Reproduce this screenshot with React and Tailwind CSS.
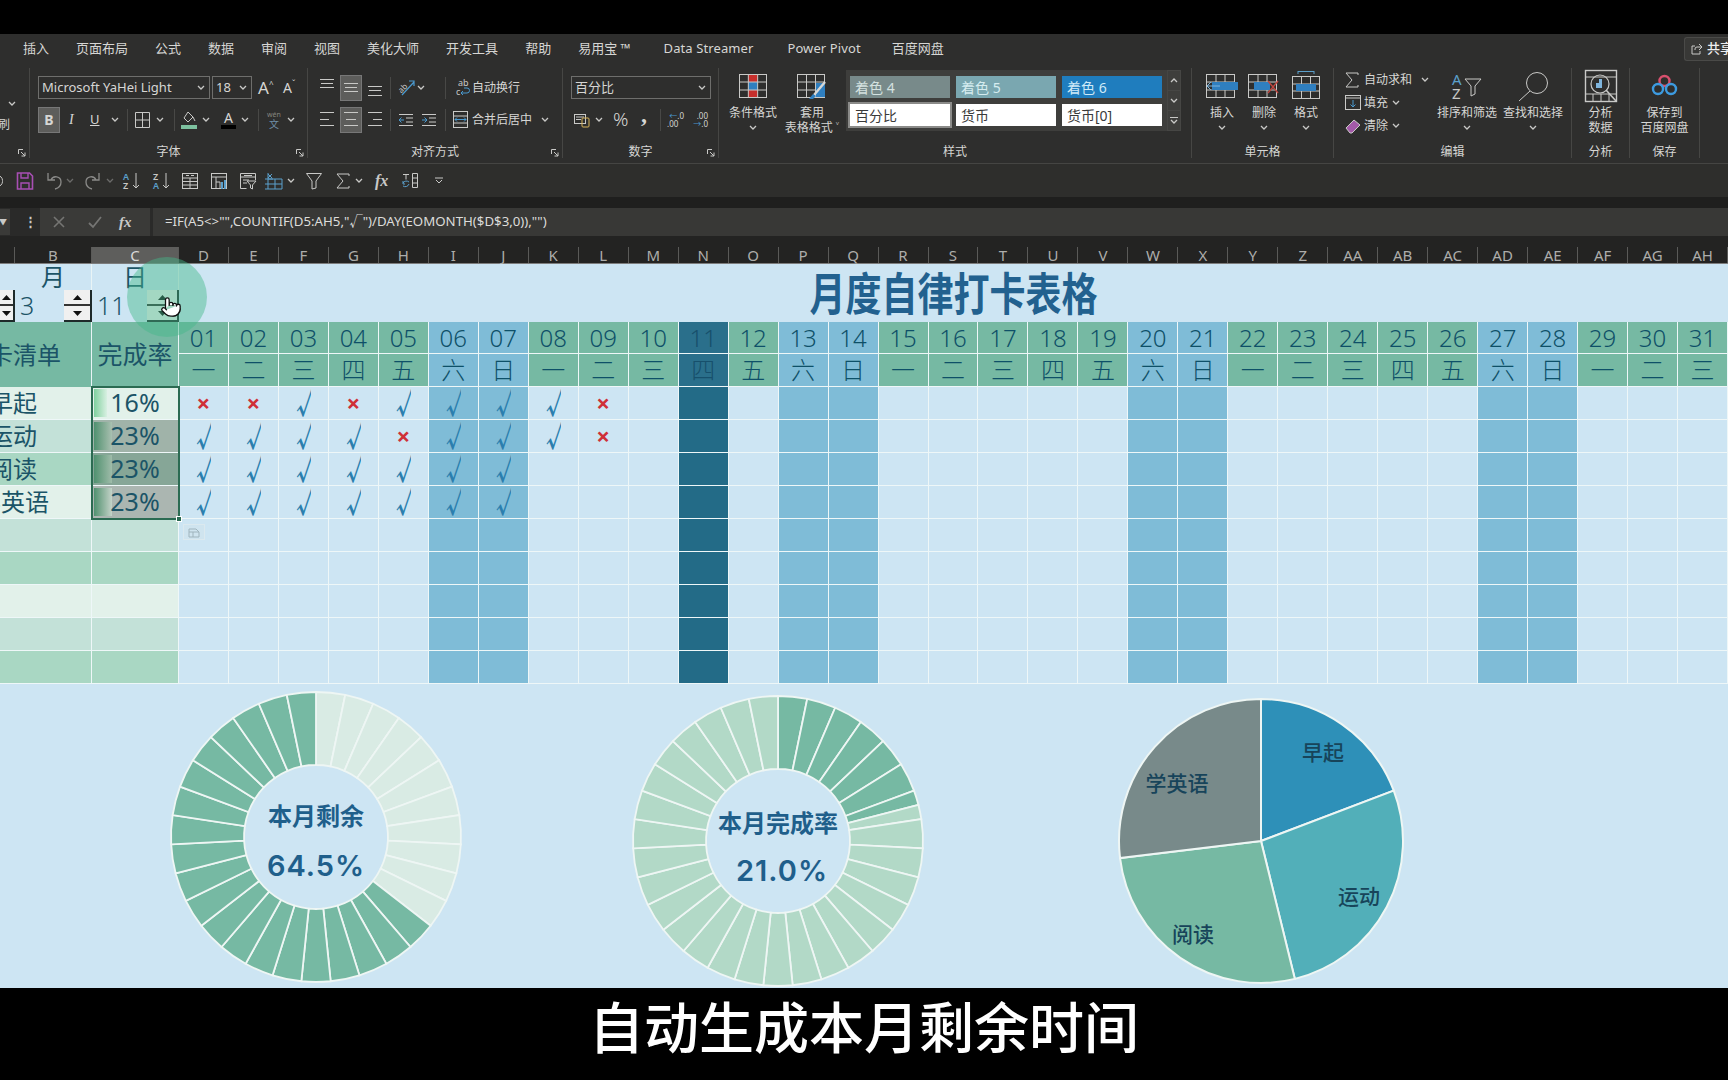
import React from "react";
import { Pointer } from "lucide-react";

const COLS = "D E F G H I J K L M N O P Q R S T U V W X Y Z AA AB AC AD AE AF AG AH".split(" ");
const WEEK = ["一", "二", "三", "四", "五", "六", "日"];
const days = Array.from({ length: 31 }, (_, i) => i);
const isWeekend = (i) => i % 7 === 5 || i % 7 === 6;

const rows = [
  { name: "早起", pct: "16%", bg: "bg-[#e2f1ea]", pctBg: "bg-[#e2f1ea]", bar: "w-[13px] from-[#7ed09f] to-[#d8f0e2]", marks: "xx√x√√√√x" },
  { name: "运动", pct: "23%", bg: "bg-[#c3e1d8]", pctBg: "bg-[#a0b3a9]", bar: "w-[18px] from-[#4f9170] to-[#a9c0b1]", marks: "√√√√x√√√x" },
  { name: "阅读", pct: "23%", bg: "bg-[#a9d7c3]", pctBg: "bg-[#86a697]", bar: "w-[18px] from-[#4f9170] to-[#9fbcaa]", marks: "√√√√√√√" },
  { name: "学英语", pct: "23%", bg: "bg-[#e2f1ea]", pctBg: "bg-[#abb6b1]", bar: "w-[18px] from-[#4f9170] to-[#c4d3c9]", marks: "√√√√√√√" },
  { name: "", pct: "", bg: "bg-[#c3e1d8]", pctBg: "bg-[#c3e1d8]", marks: "" },
  { name: "", pct: "", bg: "bg-[#a9d7c3]", pctBg: "bg-[#a9d7c3]", marks: "" },
  { name: "", pct: "", bg: "bg-[#e2f1ea]", pctBg: "bg-[#e2f1ea]", marks: "" },
  { name: "", pct: "", bg: "bg-[#c3e1d8]", pctBg: "bg-[#c3e1d8]", marks: "" },
  { name: "", pct: "", bg: "bg-[#a9d7c3]", pctBg: "bg-[#a9d7c3]", marks: "" },
];

const GREY = "#c9c9c7";
const BLUE = "#2f7fc0";
const SKY = "#5ba0cc";

const Ico = ({ w, h, className = "", children }) => (
  <svg width={w} height={h} viewBox={`0 0 ${w} ${h}`} fill="none" stroke={GREY} strokeWidth="1" className={`shrink-0 overflow-visible ${className}`}>
    {children}
  </svg>
);

const Chev = ({ className = "" }) => (
  <Ico w={8} h={5} className={className}>
    <path d="M1 1l3 3 3-3" strokeWidth="1.3" />
  </Ico>
);

const Sep = ({ className = "" }) => <div className={`h-[22px] w-px shrink-0 bg-[#484846] ${className}`} />;

// three text lines used by the alignment buttons
const Lines = ({ ys, spans, className = "" }) => (
  <Ico w={14} h={23} className={className}>
    {ys.map((y, i) => (
      <path key={i} d={`M${spans[i][0]} ${y + 0.5}H${spans[i][1]}`} />
    ))}
  </Ico>
);

const Grid3 = ({ children, w = 30, h = 22 }) => (
  <Ico w={w} h={h}>
    {children}
    <rect x=".5" y=".5" width={w - 1} height={h - 1} />
    <path d={`M.5 ${h / 3}H${w}M.5 ${(2 * h) / 3}H${w}M${w / 3} 0V${h}M${(2 * w) / 3} 0V${h}`} />
  </Ico>
);

const Launcher = () => (
  <Ico w={8} h={8} className="absolute bottom-[1px] right-[3px]">
    <path d="M.5 5V.5H5M3 3l4 4M7 3.5V7H3.5" />
  </Ico>
);

const Group = ({ className, label, launcher, children }) => (
  <div className={`relative flex h-[90px] shrink-0 flex-col border-r border-[#464644] ${className}`}>
    <div className="h-[77px]">{children}</div>
    <div className="h-[13px] text-center text-[12px] leading-[13px]">{label}</div>
    {launcher && <Launcher />}
  </div>
);

const BigBtn = ({ className, icon, lines, chev = true }) => (
  <div className={`flex shrink-0 flex-col items-center ${className}`}>
    <div className="flex h-[37px] items-start pt-[6px]">{icon}</div>
    {lines.map((t) => (
      <div key={t} className="h-[15px] whitespace-nowrap text-[12px] leading-[15px]">{t}</div>
    ))}
    {chev && <div className="flex h-[15px] items-center"><Chev /></div>}
  </div>
);

const StyleCell = ({ className, children }) => (
  <div className={`flex h-[22px] w-[100px] items-center pl-[5px] text-[14px] ${className}`}>{children}</div>
);

const Ribbon = () => (
  <div className="h-[130px] shrink-0 border-b border-[#454543] bg-[#2e2e2d] text-[#d6d6d4]">
    <div className="flex h-[30px] items-center gap-[27px] pl-[23px] text-[13px]">
      <span>插入</span>
      <span>页面布局</span>
      <span>公式</span>
      <span>数据</span>
      <span>审阅</span>
      <span>视图</span>
      <span>美化大师</span>
      <span>开发工具</span>
      <span>帮助</span>
      <span>易用宝 ™</span>
      <span className="ml-[6px] tracking-[0.1px]">Data Streamer</span>
      <span className="ml-[7px] tracking-[0.1px]">Power Pivot</span>
      <span className="ml-[4px]">百度网盘</span>
      <div className="ml-auto flex h-[24px] w-[44px] items-center gap-[4px] overflow-hidden rounded-l-[3px] border border-r-0 border-[#4a4a48] bg-[#383836] pl-[6px] text-[#eee]">
        <Ico w={12} h={12}><path d="M8 1l3 3-3 3M11 4H6a2 2 0 00-2 2v1M9 8v3H1V3h3" /></Ico>
        <span className="whitespace-nowrap font-medium">共享</span>
      </div>
    </div>

    <div className="mt-[4px] flex">
      {/* clipboard stub */}
      <Group className="w-[30px]" launcher>
        <div className="flex h-full flex-col items-start pt-[33px]">
          <Chev className="ml-[8px]" />
          <span className="ml-[-2px] mt-[12px] text-[12px] leading-[14px]">刷</span>
        </div>
      </Group>

      {/* font */}
      <Group className="w-[278px]" label="字体" launcher>
        <div className="mt-[8px] flex h-[23px] items-center">
          <div className="ml-[8px] flex h-[23px] w-[172px] items-center justify-between border border-[#6e6e6c] pl-[3px] pr-[4px] text-[13px]">
            Microsoft YaHei Light <Chev />
          </div>
          <div className="ml-[2px] flex h-[23px] w-[40px] items-center justify-between border border-[#6e6e6c] pl-[3px] pr-[4px] text-[13px]">
            18 <Chev />
          </div>
          <span className="ml-[6px] w-[18px] text-[17px] leading-none">A<span className="align-super text-[8px]">^</span></span>
          <span className="ml-[7px] w-[15px] text-[14px] leading-none">A<span className="align-super text-[8px]">ˇ</span></span>
        </div>
        <div className="mt-[9px] flex h-[23px] items-center">
          <div className="ml-[8px] flex h-[26px] w-[22px] items-center justify-center border border-[#777] bg-[#5d5d5b] text-[14px] font-bold">B</div>
          <span className="ml-[9px] w-[6px] font-['Liberation_Serif',serif] text-[14px] italic">I</span>
          <span className="ml-[15px] w-[12px] text-[13px] underline">U</span>
          <Chev className="ml-[9px]" />
          <Sep className="ml-[8px]" />
          <Ico w={15} h={16} className="ml-[7px]"><path d="M.5.5h14v15H.5zM7.5 0v16M0 8h15" /></Ico>
          <Chev className="ml-[6px]" />
          <Sep className="ml-[10px]" />
          <Ico w={16} h={18} className="ml-[6px]">
            <path d="M7 1l5 5-5 5-4-4zM12 6l2 4" />
            <rect x="0" y="14" width="16" height="4" fill="#7dc19f" stroke="none" />
          </Ico>
          <Chev className="ml-[5px]" />
          <div className="ml-[11px] flex w-[15px] flex-col items-center">
            <span className="text-[14px] leading-[14px]">A</span>
            <div className="h-[4px] w-[15px] bg-black" />
          </div>
          <Chev className="ml-[5px]" />
          <Sep className="ml-[9px]" />
          <div className="ml-[8px] flex w-[14px] flex-col items-center text-[#85857f]">
            <span className="text-[7px] leading-[8px]">wén</span>
            <span className="text-[10px] leading-[10px] text-[#6f8fa8]">文</span>
          </div>
          <Chev className="ml-[6px]" />
        </div>
      </Group>

      {/* alignment */}
      <Group className="w-[255px]" label="对齐方式" launcher>
        <div className="mt-[8px] flex h-[23px] items-center">
          <Lines className="ml-[12px]" ys={[3, 7, 11]} spans={[[0, 14], [1, 13], [0, 14]]} />
          <div className="ml-[6px] flex h-[26px] w-[22px] items-center justify-center border border-[#777] bg-[#5d5d5b]">
            <Lines ys={[7, 11, 15]} spans={[[0, 14], [1, 13], [0, 14]]} />
          </div>
          <Lines className="ml-[6px]" ys={[10, 14, 19]} spans={[[0, 14], [1, 13], [0, 14]]} />
          <Sep className="ml-[8px]" />
          <Ico w={17} h={18} className="ml-[7px]">
            <text x="1" y="13" fontSize="8" fill={GREY} stroke="none" transform="rotate(-45 4 11)">ab</text>
            <path d="M4 16L16 3M11 2h5v5" stroke="#4a9ad0" strokeWidth="1.2" />
          </Ico>
          <Chev className="ml-[2px]" />
          <Sep className="ml-[20px]" />
          <Ico w={15} h={19} className="ml-[9px]">
            <text x="3" y="8" fontSize="9" fill={GREY} stroke="none">ab</text>
            <text x="1" y="17" fontSize="9" fill={GREY} stroke="none">c</text>
            <path d="M7 15h5a2 2 0 000-5H9M8 13l-2 2 2 2" stroke="#4a9ad0" />
          </Ico>
          <span className="ml-[2px] text-[12px]">自动换行</span>
        </div>
        <div className="mt-[9px] flex h-[23px] items-center">
          <Lines className="ml-[12px]" ys={[4, 11, 17]} spans={[[0, 14], [0, 9], [0, 14]]} />
          <div className="ml-[6px] flex h-[26px] w-[22px] items-center justify-center border border-[#777] bg-[#5d5d5b]">
            <Lines ys={[4, 11, 17]} spans={[[0, 14], [2, 12], [0, 14]]} />
          </div>
          <Lines className="ml-[6px]" ys={[4, 11, 17]} spans={[[0, 14], [5, 14], [0, 14]]} />
          <Sep className="ml-[8px]" />
          <Ico w={14} h={14} className="ml-[8px]">
            <path d="M0 1.5h14M7 5h7M7 9h7M0 12.5h14" />
            <path d="M5 7H0M2.5 4.5L0 7l2.5 2.5" stroke="#4a9ad0" />
          </Ico>
          <Ico w={14} h={14} className="ml-[9px]">
            <path d="M0 1.5h14M7 5h7M7 9h7M0 12.5h14" />
            <path d="M0 7h5M2.5 4.5L5 7 2.5 9.5" stroke="#4a9ad0" />
          </Ico>
          <Sep className="ml-[9px]" />
          <Ico w={15} h={17} className="ml-[7px]">
            <rect x=".5" y=".5" width="14" height="16" />
            <path d="M0 5h15M0 12h15" />
            <path d="M2 8.5h11M4 6.5l-2 2 2 2M11 6.5l2 2-2 2" stroke="#4a9ad0" />
          </Ico>
          <span className="ml-[4px] text-[12px]">合并后居中</span>
          <Chev className="ml-[9px]" />
        </div>
      </Group>

      {/* number */}
      <Group className="w-[156px]" label="数字" launcher>
        <div className="mt-[8px] flex h-[23px] items-center">
          <div className="ml-[8px] flex h-[23px] w-[140px] items-center justify-between border border-[#6e6e6c] pl-[3px] pr-[4px] text-[13px]">
            百分比 <Chev />
          </div>
        </div>
        <div className="mt-[9px] flex h-[23px] items-center">
          <Ico w={16} h={16} className="ml-[11px]">
            <rect x=".5" y="2.5" width="11" height="9" />
            <path d="M2 5h8M2 7.5h5" />
            <rect x="8" y="6" width="7" height="9" rx="1" stroke="#d8b45a" />
          </Ico>
          <Chev className="ml-[5px]" />
          <span className="ml-[10px] w-[16px] text-[19px] font-light leading-none">%</span>
          <span className="ml-[12px] w-[9px] -translate-y-[6px] font-['Liberation_Serif',serif] text-[24px] font-bold leading-none">,</span>
          <Sep className="ml-[10px]" />
          <div className="ml-[6px] flex w-[17px] flex-col text-[8px] leading-[8px]">
            <span className="text-right"><span className="text-[#4a9ad0]">←</span>.0</span>
            <span>.00</span>
          </div>
          <div className="ml-[7px] flex w-[17px] flex-col text-[8px] leading-[8px]">
            <span className="text-right">.00</span>
            <span className="text-right"><span className="text-[#4a9ad0]">→</span>.0</span>
          </div>
        </div>
      </Group>

      {/* styles */}
      <Group className="w-[473px]" label="样式">
        <div className="flex">
          <BigBtn
            className="ml-[4px] w-[60px]"
            lines={["条件格式"]}
            icon={
              <Grid3 w={28} h={24}>
                <rect x="9" y="0" width="10" height="8" fill="#c62f2c" stroke="none" />
                <rect x="9" y="8" width="10" height="8" fill="#2f7fc0" stroke="none" />
                <rect x="9" y="16" width="10" height="8" fill="#c62f2c" stroke="none" />
              </Grid3>
            }
          />
          <BigBtn
            className="ml-[-1px] w-[60px]"
            lines={["套用", "表格格式 ˅"]}
            chev={false}
            icon={
              <Ico w={30} h={26}>
                <rect x=".5" y=".5" width="27" height="23" />
                <path d="M.5 8H28M.5 16H28M9.5 0v24M18.5 0v24" />
                <rect x="19" y="9" width="9" height="14" fill={BLUE} stroke="none" />
                <path d="M28 8L17 21" stroke="#d8d8d6" strokeWidth="2.4" />
                <path d="M16 20l3 2-3 3-4 0z" fill={BLUE} stroke="none" />
              </Ico>
            }
          />
          <div className="ml-[4px] mt-[2px] flex h-[61px] w-[335px] bg-[#3e3e3c] pl-[4px]">
            <div className="grid grid-cols-[100px_100px_100px] grid-rows-[22px_22px] gap-[6px] pt-[6px]">
              <StyleCell className="bg-[#788a8a] text-[#d5e2e0]">着色 4</StyleCell>
              <StyleCell className="bg-[#7aa7b0] text-[#d5ecef]">着色 5</StyleCell>
              <StyleCell className="bg-[#1f7dbe] text-[#cfeaf8]">着色 6</StyleCell>
              <StyleCell className="bg-white text-[#3a3a3a] outline-2 outline-[#8b8b89]">百分比</StyleCell>
              <StyleCell className="bg-white text-[#3a3a3a]">货币</StyleCell>
              <StyleCell className="bg-white text-[#3a3a3a]">货币[0]</StyleCell>
            </div>
            <div className="ml-[5px] flex w-[14px] flex-col border border-[#464644]">
              <div className="flex h-[20px] items-center justify-center border-b border-[#464644]"><Chev className="rotate-180" /></div>
              <div className="flex h-[20px] items-center justify-center border-b border-[#464644]"><Chev /></div>
              <div className="flex flex-1 flex-col items-center justify-center">
                <div className="mb-[1px] h-px w-[8px] bg-[#c9c9c7]" />
                <Chev />
              </div>
            </div>
          </div>
        </div>
      </Group>

      {/* cells */}
      <Group className="w-[142px]" label="单元格">
        <div className="flex pl-[9px]">
          <BigBtn
            className="w-[42px]"
            lines={["插入"]}
            icon={
              <Ico w={32} h={24}>
                <rect x=".5" y=".5" width="28" height="23" />
                <path d="M0 8h29M0 16h29M10 0v24M19 0v24" />
                <rect x="6" y="8" width="26" height="8" fill={BLUE} stroke="none" />
                <path d="M14 12H1M5 8l-4 4 4 4" stroke="#7fb5dd" />
              </Ico>
            }
          />
          <BigBtn
            className="w-[42px]"
            lines={["删除"]}
            icon={
              <Ico w={32} h={24}>
                <rect x=".5" y=".5" width="28" height="23" />
                <path d="M0 8h29M0 16h29M10 0v24M19 0v24" />
                <rect x="6" y="8" width="16" height="8" fill={BLUE} stroke="none" />
                <path d="M20 7l10 12M30 7L20 19" stroke="#c0473f" strokeWidth="1.4" />
              </Ico>
            }
          />
          <BigBtn
            className="w-[42px]"
            lines={["格式"]}
            icon={
              <Ico w={28} h={28} className="-mt-[3px]">
                <path d="M6 .5h16M6 0v3M22 0v3" stroke="#5ba0cc" />
                <rect x=".5" y="5.5" width="27" height="22" />
                <path d="M0 13h28M0 20h28M9.5 5v23M18.5 5v23" />
                <rect x="4" y="13" width="20" height="7" fill={BLUE} stroke="none" />
              </Ico>
            }
          />
        </div>
      </Group>

      {/* editing */}
      <Group className="w-[238px]" label="编辑">
        <div className="flex pl-[11px]">
          <div className="w-[89px] shrink-0 text-[12px]">
            <div className="flex h-[23px] items-center">
              <Ico w={14} h={16}><path d="M13 3V1H1l6 7-6 7h12v-2" /></Ico>
              <span className="ml-[5px]">自动求和</span>
              <Chev className="ml-[9px]" />
            </div>
            <div className="flex h-[23px] items-center">
              <Ico w={16} h={15}>
                <rect x=".5" y=".5" width="15" height="14" />
                <path d="M0 3h16" />
                <path d="M8 5v7M5.5 9.5L8 12l2.5-2.5" stroke="#4a9ad0" />
              </Ico>
              <span className="ml-[3px]">填充</span>
              <Chev className="ml-[4px]" />
            </div>
            <div className="flex h-[23px] items-center">
              <Ico w={16} h={16}>
                <path d="M1 10l8-8 6 5-8 8H5z" fill="#a35aa8" stroke="#c9c9c7" />
              </Ico>
              <span className="ml-[3px]">清除</span>
              <Chev className="ml-[4px]" />
            </div>
          </div>
          <BigBtn
            className="w-[66px]"
            lines={["排序和筛选"]}
            icon={
              <Ico w={30} h={26} className="-mt-[1px]">
                <text x="0" y="12" fontSize="15" fill={SKY} stroke="none">A</text>
                <text x="0" y="26" fontSize="15" fill={GREY} stroke="none">Z</text>
                <path d="M13 6h16l-6 7v8l-4 2V13z" />
              </Ico>
            }
          />
          <BigBtn
            className="w-[66px]"
            lines={["查找和选择"]}
            icon={
              <Ico w={30} h={29} className="-mt-[2px]">
                <circle cx="19" cy="11" r="10.5" />
                <path d="M12 19L1 29" />
              </Ico>
            }
          />
        </div>
      </Group>

      {/* analysis */}
      <Group className="w-[58px]" label="分析">
        <BigBtn
          className="w-full"
          lines={["分析", "数据"]}
          chev={false}
          icon={
            <Ico w={32} h={32} className="-mt-[4px]">
              <rect x=".5" y=".5" width="31" height="31" strokeWidth="1.4" />
              <path d="M0 7h32M0 24h32M8 24v8M16 24v8M24 24v8" />
              <circle cx="15" cy="14" r="9" strokeWidth="1.2" />
              <path d="M11 18v-5h3v5zM14 18V9h3v9z" fill="#7fb5dd" stroke="none" />
              <path d="M21 20l10 11" strokeWidth="1.6" />
            </Ico>
          }
        />
      </Group>

      {/* save */}
      <Group className="w-[70px]" label="保存">
        <BigBtn
          className="w-full"
          lines={["保存到", "百度网盘"]}
          chev={false}
          icon={
            <Ico w={27} h={24} className="-mt-[1px]">
              <circle cx="13.5" cy="8" r="5" stroke="#d8506e" strokeWidth="2.4" />
              <circle cx="7" cy="16" r="5" stroke="#3d9be0" strokeWidth="2.4" />
              <circle cx="20" cy="16" r="5" stroke="#3d9be0" strokeWidth="2.4" />
            </Ico>
          }
        />
      </Group>
    </div>
  </div>
);

const SortIco = ({ top, bottom, topColor, bottomColor, className = "" }) => (
  <Ico w={18} h={18} className={className}>
    <text x="0" y="8" fontSize="9" fontWeight="600" fill={topColor} stroke="none">{top}</text>
    <text x="0" y="17" fontSize="9" fontWeight="600" fill={bottomColor} stroke="none">{bottom}</text>
    <path d="M13 1v15M10 13l3 3 3-3" />
  </Ico>
);

const Qat = () => (
  <div className="flex h-[33px] shrink-0 items-center bg-[#2e2e2c]">
    <div className="ml-[-8px] h-[12px] w-[11px] rounded-full border border-[#c9c9c7]" />
    <Ico w={16} h={18} className="ml-[14px]">
      <path d="M.5 1h12l3 3v13H.5z" stroke="#a84fb4" strokeWidth="1.6" />
      <path d="M4 1v5h7V1M4 17v-6h8v6" stroke="#a84fb4" strokeWidth="1.4" />
    </Ico>
    <Ico w={15} h={18} className="ml-[14px]">
      <path d="M4 8C6 3 14 4 14 10c0 3-2 6-6 7M1 1v7h7" stroke="#8a8a88" strokeWidth="1.3" />
    </Ico>
    <Chev className="ml-[4px] opacity-40" />
    <Ico w={14} h={18} className="ml-[12px]">
      <path d="M10 8C8 3 0 4 0 10c0 3 2 6 6 7M13 1v7H6" stroke="#8a8a88" strokeWidth="1.3" />
    </Ico>
    <Chev className="ml-[6px] opacity-40" />
    <SortIco className="ml-[9px]" top="A" bottom="Z" topColor={SKY} bottomColor={GREY} />
    <SortIco className="ml-[12px]" top="Z" bottom="A" topColor={GREY} bottomColor={SKY} />
    {/* record form */}
    <Ico w={16} h={16} className="ml-[11px]">
      <rect x=".5" y=".5" width="15" height="15" />
      <path d="M0 5h16M0 8.5h16M0 12h16M8 5v11M4 2.5h3M9 2.5h3" />
    </Ico>
    {/* pivot table */}
    <Ico w={16} h={16} className="ml-[13px]">
      <rect x=".5" y=".5" width="15" height="15" />
      <path d="M0 4h16M5 4v12M5 9h4v7" />
      <path d="M11 9v7M14 7v9" stroke={SKY} strokeWidth="2" />
    </Ico>
    {/* filtered table */}
    <Ico w={16} h={16} className="ml-[13px]">
      <path d="M15.5 7V.5H.5v15h6M0 4h16M4 2.5h8M3 7h6M3 10h4" />
      <path d="M7 8h9l-3.5 4v4l-2-1v-3z" />
    </Ico>
    {/* blue table */}
    <Ico w={17} h={16} className="ml-[9px]">
      <path d="M3 6h14v10H3zM3 11h14M10 6v10" stroke={SKY} />
      <path d="M0 6h8M0 11h3M0 16h3M3 0v6M7 1L3 5M3 1l4 4" stroke={SKY} />
    </Ico>
    <Chev className="ml-[5px]" />
    <Ico w={16} h={18} className="ml-[11px]"><path d="M.5 1.5h15L10 9v7l-4 1V9z" /></Ico>
    <Ico w={14} h={16} className="ml-[14px]"><path d="M13 3V1H1l6 7-6 7h12v-2" /></Ico>
    <Chev className="ml-[5px]" />
    <span className="ml-[12px] w-[15px] font-['Liberation_Serif',serif] text-[16px] font-bold italic text-[#c9c9c7]">fx</span>
    {/* refresh list */}
    <Ico w={16} h={16} className="ml-[12px]">
      <path d="M10.5.5h5v14h-5zM10 5h6M10 10h6M1 1.5h6M4 1.5v5" />
      <path d="M1 10a4 4 0 016-1M7 11a4 4 0 01-6 2M1 8v3h2" stroke={SKY} />
    </Ico>
    <Ico w={8} h={7} className="ml-[17px]"><path d="M0 1h8M1 3l3 3 3-3" /></Ico>
  </div>
);

const FormulaBar = () => (
  <div className="flex h-[28px] shrink-0 items-center bg-[#2a2a29]">
    <div className="flex h-[26px] w-[10px] items-center bg-[#3a3a38]">
      <span className="ml-[-1px] text-[8px] text-[#c9c9c7]">▼</span>
    </div>
    <span className="ml-[14px] w-[16px] text-[13px] font-bold text-[#c9c9c7]">⋮</span>
    <div className="flex h-[28px] w-[110px] items-center bg-[#3a3a38]">
      <Ico w={12} h={12} className="ml-[13px]"><path d="M1 1l10 10M11 1L1 11" stroke="#757573" strokeWidth="1.6" /></Ico>
      <Ico w={14} h={12} className="ml-[23px]"><path d="M1 7l4 4 8-10" stroke="#757573" strokeWidth="1.8" /></Ico>
      <span className="ml-[17px] font-['Liberation_Serif',serif] text-[15px] font-bold italic text-[#c9c9c7]">fx</span>
    </div>
    <div className="ml-[3px] flex h-[28px] flex-1 items-center bg-[#383836] pl-[12px] text-[13.25px] text-[#dcdcda]">
      {'=IF(A5<>"",COUNTIF(D5:AH5,"√")/DAY(EOMONTH($D$3,0)),"")'}
    </div>
  </div>
);

const ColHeader = () => (
  <div className="flex h-[28px] shrink-0 flex-col justify-end border-b border-[#7d7d7d] bg-[#232322]">
    <div className="grid h-[16px] grid-cols-[15px_77px_87px_repeat(31,1fr)] text-[15px] leading-[16px] text-[#adadab]">
      <div className="border-r border-[#5a5a58]" />
      <div className="flex items-center justify-center border-r border-[#5a5a58]">B</div>
      <div className="flex items-center justify-center border-r border-[#5a5a58] bg-[#5e5e5c] text-[#dadada]">C</div>
      {COLS.map((c) => (
        <div key={c} className="flex items-center justify-center border-r border-[#5a5a58]">{c}</div>
      ))}
    </div>
  </div>
);

const Spinner = ({ className }) => (
  <div className={`flex h-full shrink-0 flex-col border-b-2 border-r-2 border-[#1e2a2a] bg-[#f0f0f0] ${className}`}>
    <div className="flex flex-1 items-center justify-center border-b-2 border-[#333]">
      <svg width="9" height="5" viewBox="0 0 9 5"><path d="M4.5 0L9 5H0z" fill="#111" /></svg>
    </div>
    <div className="flex flex-1 items-center justify-center">
      <svg width="9" height="5" viewBox="0 0 9 5"><path d="M0 0h9L4.5 5z" fill="#111" /></svg>
    </div>
  </div>
);

const dayBg = (i) => (i === 10 ? "bg-[#2a6f8b] text-[#17506c]" : isWeekend(i) ? "bg-[#7fbcd7] text-[#0e5068]" : "bg-[#76b9a3] text-[#0e5068]");
const cellBg = (i) => (i === 10 ? "bg-[#236b87]" : isWeekend(i) ? "bg-[#7fbcd7]" : "bg-[#cde5f3]");
const LINE = "border-b border-r border-[#eef7f8]";

const Sheet = () => (
  <div className="relative grid h-[420px] shrink-0 grid-cols-[15px_77px_87px_repeat(31,1fr)] grid-rows-[26px_32px_32px_33px_repeat(9,33px)] bg-[#cde5f3] text-[#1b5467]">
    <div className="col-[4/-1] row-[1/3] flex items-center justify-center pt-[4px] text-[#22618f]">
      <span className="inline-block scale-y-125 text-[36px] font-bold leading-none">月度自律打卡表格</span>
    </div>

    {/* top-left: month and day spinners */}
    <div />
    <div className="flex items-center justify-center border-r border-[#e9f4f6] text-[24px]">月</div>
    <div className="flex items-center justify-center border-r border-[#e9f4f6] text-[24px]">日</div>
    <Spinner className="w-[15px]" />
    <div className="flex items-center justify-between pl-[5px] text-[25px] font-light">
      3 <Spinner className="w-[28px]" />
    </div>
    <div className="flex items-center justify-between pl-[5px] text-[25px] font-light">
      11 <Spinner className="w-[32px]" />
    </div>

    {/* two header rows */}
    <div className="col-span-2 row-span-2 flex items-center overflow-hidden border-r border-[#e9f4f6] bg-[#76b9a3] text-[24px]">
      <div className="ml-[-66px] w-[158px] shrink-0 text-center">打卡清单</div>
    </div>
    <div className="row-span-2 flex items-center justify-center border-r border-[#e9f4f6] bg-[#76b9a3] text-[25px]">完成率</div>
    {days.map((i) => (
      <div key={i} className={`flex items-center justify-center text-[24px] font-light ${LINE} ${dayBg(i)}`}>
        {String(i + 1).padStart(2, "0")}
      </div>
    ))}
    {days.map((i) => (
      <div key={i} className={`flex items-center justify-center text-[24px] font-light ${LINE} ${dayBg(i)}`}>
        {WEEK[i % 7]}
      </div>
    ))}

    {/* data rows */}
    {rows.map((r, ri) => (
      <React.Fragment key={ri}>
        <div className={`col-span-2 flex items-center overflow-hidden text-[24px] ${LINE} ${r.bg}`}>
          <div className="ml-[-66px] w-[158px] shrink-0 text-center">{r.name}</div>
        </div>
        <div className={`relative flex items-center justify-center text-[25px] ${LINE} ${r.pctBg}`}>
          {r.bar && <div className={`absolute bottom-[2px] left-[2px] top-[2px] bg-linear-to-r ${r.bar}`} />}
          <span className="relative">{r.pct}</span>
        </div>
        {days.map((i) => (
          <div key={i} className={`flex items-center justify-center ${LINE} ${cellBg(i)}`}>
            {/* clipped so the font's overbar on the root sign does not show */}
            {r.marks[i] === "√" && <span className="inline-block w-[15px] overflow-hidden text-[28px] font-bold leading-none text-[#2b7fae]">√</span>}
            {r.marks[i] === "x" && <span className="text-[24px] font-bold leading-none text-[#cf3038]">×</span>}
          </div>
        ))}
      </React.Fragment>
    ))}

    {/* selection frame over C5:C8 */}
    <div className="absolute left-[91px] top-[122px] h-[134px] w-[89px] border-2 border-[#2b6b52]">
      <div className="absolute bottom-[-4px] right-[-4px] h-[6px] w-[6px] border border-white bg-[#2b6b52]" />
    </div>
    {/* quick analysis tag */}
    <div className="absolute left-[183px] top-[260px] flex h-[16px] w-[22px] items-center justify-center border border-[#dbe9ef] bg-[#cfe4ef]">
      <Ico w={12} h={12}><path d="M1 3h7l3 3v5H1zM1 6h10M5 6v5" stroke="#9fb4bd" /></Ico>
    </div>
    {/* click highlight and hand cursor */}
    <div className="absolute left-[127px] top-[-7px] h-[80px] w-[80px] rounded-full bg-[#45b98a]/45" />
    <Pointer size={22} fill="#fff" stroke="#111" strokeWidth={1.4} className="absolute left-[160px] top-[32px]" />
  </div>
);

// svg ring segment from angle a to b, degrees clockwise from the top
const polar = (r, deg) => {
  const t = ((deg - 90) * Math.PI) / 180;
  return [r * Math.cos(t), r * Math.sin(t)];
};
const ring = (a, b, R, r) => {
  const [x1, y1] = polar(R, a);
  const [x2, y2] = polar(R, b);
  const [x3, y3] = polar(r, b);
  const [x4, y4] = polar(r, a);
  return `M${x1} ${y1}A${R} ${R} 0 0 1 ${x2} ${y2}L${x3} ${y3}A${r} ${r} 0 0 0 ${x4} ${y4}Z`;
};

const CJK = "'Noto Sans CJK SC', sans-serif";
const STEP = 360 / 31;

const Donut = ({ className, segments, title, value, titleY, valueY, valueX = 0 }) => (
  <svg viewBox="-150 -150 300 300" className={`h-[300px] w-[300px] shrink-0 ${className}`}>
    {segments.map(([a, b, fill], i) => (
      <path key={i} d={ring(a, b, 145, 72)} fill={fill} stroke="#eef6f4" strokeWidth="1.8" />
    ))}
    <text y={titleY} textAnchor="middle" fontFamily={CJK} fontWeight="700" fontSize="24" fill="#1f5f8b">{title}</text>
    <text x={valueX} y={valueY} textAnchor="middle" fontFamily="Inter, sans-serif" fontWeight="600" fontSize="29" letterSpacing="1" fill="#1f5f8b">{value}</text>
  </svg>
);

const leftSegs = days.map((i) => [i * STEP, (i + 1) * STEP, i < 11 ? "#d9ebe4" : "#76b9a3"]);
const doneSegs = [
  ...days.slice(0, 6).map((i) => [i * STEP, (i + 1) * STEP, "#76b9a3"]),
  [6 * STEP, 75.6, "#76b9a3"],
  [75.6, 7 * STEP, "#b2d9c7"],
  ...days.slice(7).map((i) => [i * STEP, (i + 1) * STEP, "#b2d9c7"]),
];

const pie = [
  { a: 0, b: 69.2, fill: "#2e90b8" },
  { a: 69.2, b: 166.2, fill: "#52afb9" },
  { a: 166.2, b: 263.1, fill: "#76b9a3" },
  { a: 263.1, b: 360, fill: "#788a8a" },
];

const slice = (a, b, R) => {
  const [x1, y1] = polar(R, a);
  const [x2, y2] = polar(R, b);
  return `M0 0L${x1} ${y1}A${R} ${R} 0 0 1 ${x2} ${y2}Z`;
};

const Pie = ({ className }) => (
  <svg viewBox="-150 -150 300 300" className={`h-[300px] w-[300px] shrink-0 ${className}`}>
    {pie.map((p) => (
      <path key={p.a} d={slice(p.a, p.b, 142)} fill={p.fill} stroke="#eef6f4" strokeWidth="2" />
    ))}
    <g fontFamily={CJK} fontWeight="500" fontSize="21" textAnchor="middle" fill="#17445a">
      <text x="62" y="-81">早起</text>
      <text x="98" y="63">运动</text>
      <text x="-68" y="101">阅读</text>
      <text x="-84" y="-50">学英语</text>
    </g>
  </svg>
);

const Charts = () => (
  <div className="flex h-[304px] shrink-0 items-start overflow-hidden bg-[#cde5f3] pl-[166px]">
    <Donut className="mt-[3px]" segments={leftSegs} title="本月剩余" value="64.5%" titleY={-12} valueY={39} />
    <Donut className="ml-[162px] mt-[7px]" segments={doneSegs} title="本月完成率" value="21.0%" titleY={-9} valueY={40} valueX={4} />
    <Pie className="ml-[183px] mt-[7px]" />
  </div>
);

export default function App() {
  return (
    <div className="flex h-[1080px] w-[1728px] flex-col overflow-hidden bg-black font-['Noto_Sans','Noto_Sans_CJK_SC',sans-serif]">
      <div className="h-[34px] shrink-0" />
      <Ribbon />
      <Qat />
      <div className="h-[11px] shrink-0 bg-[#1f1f1e]" />
      <FormulaBar />
      <ColHeader />
      <Sheet />
      <Charts />
      <div className="flex h-[92px] shrink-0 items-center justify-center pb-[14px] text-[55px] font-medium text-white">
        自动生成本月剩余时间
      </div>
    </div>
  );
}
